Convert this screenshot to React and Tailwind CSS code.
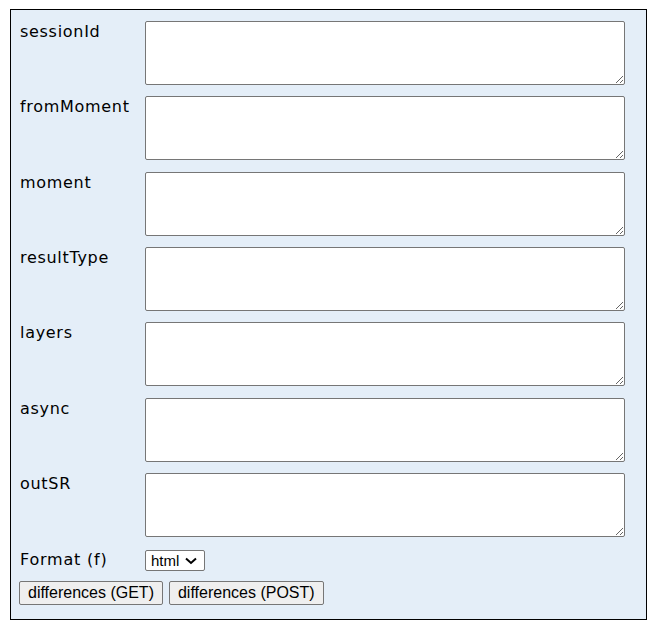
import React from "react";

const fields = ["sessionId", "fromMoment", "moment", "resultType", "layers", "async", "outSR"];

export default function App() {
  return (
    <div className="pt-[9px] pl-[10px]">
      <div
        className="w-[637px] border border-black bg-[#e4eef8] pl-[8px] pr-[20px] pt-[11px] pb-[14px]"
        style={{ fontFamily: "Verdana, 'DejaVu Sans', sans-serif" }}
      >
        <div className="flex flex-col gap-[11.33px]">
          {fields.map((f) => (
            <div key={f} className="flex items-start">
              <div className="w-[126px] pl-[1px] text-[16px] leading-[22px] tracking-[0.7px] text-black">{f}</div>
              <textarea className="block h-[64px] w-[480px] rounded-[2px] border border-[#767676] bg-white" />
            </div>
          ))}
        </div>
        <div className="mt-[13px] flex items-center">
          <div className="w-[126px] pl-[1px] text-[16px] leading-[20px] tracking-[0.8px] text-black">Format (f)</div>
          <div className="relative h-[21px] w-[60px]">
            <select
              className="block h-[21px] w-[60px] appearance-none rounded-[2px] border border-[#767676] bg-white pl-[5px] text-[15px] leading-[19px] text-black"
              style={{ fontFamily: "Arial, 'Liberation Sans', sans-serif" }}
              defaultValue="html"
            >
              <option value="html">html</option>
              <option value="json">json</option>
            </select>
            <svg
              className="pointer-events-none absolute left-[40px] top-[7px]"
              width="12"
              height="8"
              viewBox="0 0 12 8"
            >
              <path d="M1 1.5 L6 6 L11 1.5" fill="none" stroke="#000" strokeWidth="2" />
            </svg>
          </div>
        </div>
        <div
          className="mt-[10px] flex gap-[6px]"
          style={{ fontFamily: "Arial, 'Liberation Sans', sans-serif" }}
        >
          <button className="h-[24px] rounded-[2px] border border-[#767676] bg-[#efefef] px-[8px] text-[16px] leading-[20px] text-black">
            differences (GET)
          </button>
          <button className="h-[24px] rounded-[2px] border border-[#767676] bg-[#efefef] px-[8px] text-[16px] leading-[20px] text-black">
            differences (POST)
          </button>
        </div>
      </div>
    </div>
  );
}
